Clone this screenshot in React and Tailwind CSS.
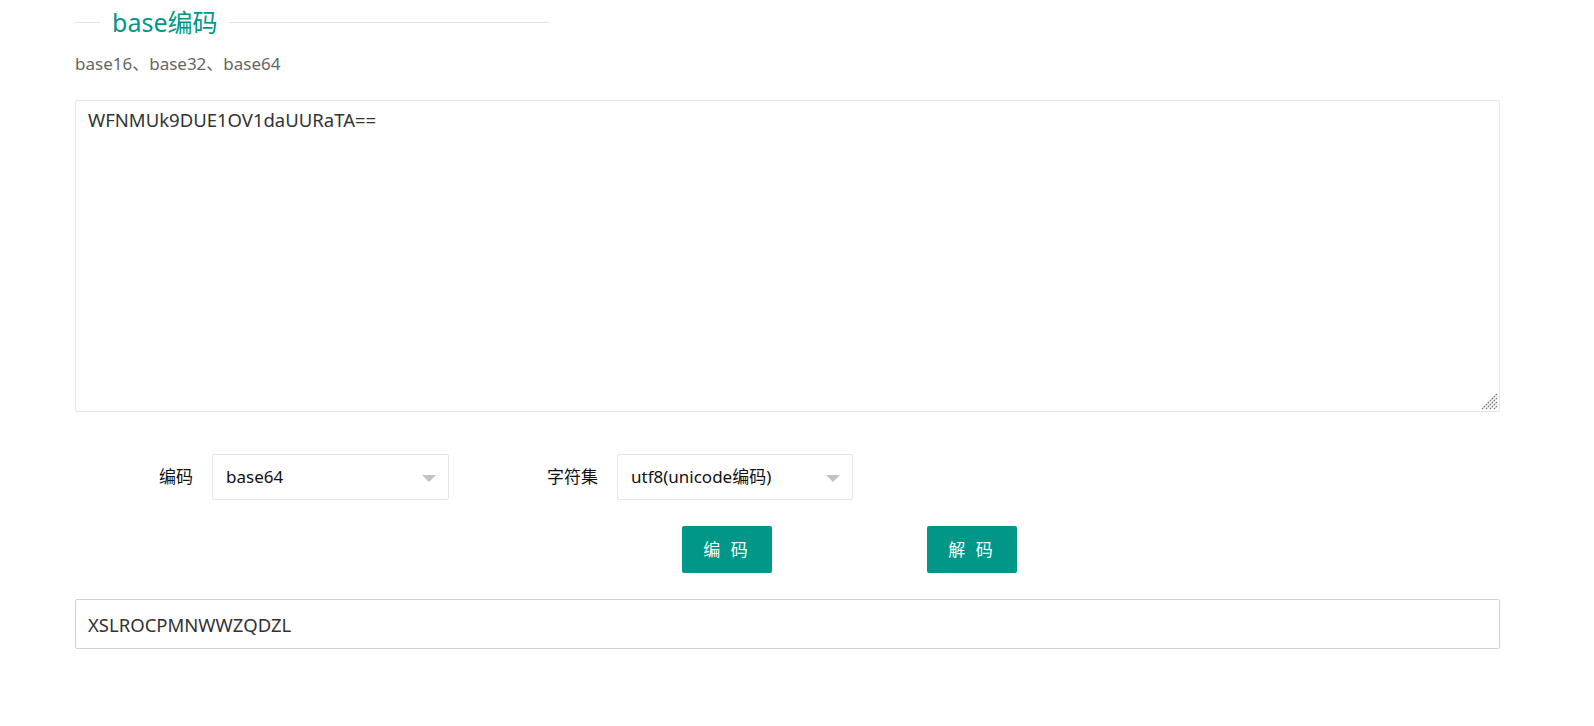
import { useState } from 'react';

const FONT = { fontFamily: '"Noto Sans", "Noto Sans CJK SC", sans-serif' };

const Select = ({ value, width }) => (
  <div
    className={`relative h-[46px] ${width} rounded-[2px] border border-[#e6e6e6] bg-white pl-[13px] flex items-center text-[17px] text-[#111]`}
  >
    <span>{value}</span>
    <span className="absolute right-[12px] top-[20px] border-x-[7px] border-t-[7px] border-x-transparent border-t-[#c2c2c2]" />
  </div>
);

export default function App() {
  const [input, setInput] = useState('WFNMUk9DUE1OV1daUURaTA==');
  const [output] = useState('XSLROCPMNWWZQDZL');

  return (
    <div className="min-h-[726px] bg-white pl-[75px] pr-[94px] pt-[7px]" style={FONT}>
      {/* Title */}
      <div className="w-[475px] h-[30px] flex items-center">
        <span className="w-[25px] h-px bg-[#e6e6e6]" />
        <h2 className="px-[12px] text-[25px] leading-[30px] text-[#009688]">base编码</h2>
        <span className="flex-1 h-px bg-[#e6e6e6]" />
      </div>
      <p className="mt-[15px] text-[17px] leading-[24px] text-[#666]">base16、base32、base64</p>

      {/* Input */}
      <div className="relative mt-[24px]">
        <textarea
          value={input}
          onChange={e => setInput(e.target.value)}
          className="block w-full h-[312px] resize-none rounded-[2px] border border-[#e6e6e6] px-[12px] py-[7px] text-[18.5px] leading-[24px] text-[#333] outline-none"
        />
        <svg className="absolute right-[2px] bottom-[2px] pointer-events-none" width="17" height="17" viewBox="0 0 17 17">
          <g stroke="#777" strokeWidth="1.2" strokeDasharray="2 0.8">
            <line x1="16" y1="1" x2="1" y2="16" />
            <line x1="16" y1="5" x2="5" y2="16" />
            <line x1="16" y1="9" x2="9" y2="16" />
            <line x1="16" y1="13" x2="13" y2="16" />
          </g>
        </svg>
      </div>

      {/* Options */}
      <div className="mt-[42px] flex items-center">
        <label className="w-[137px] pr-[19px] text-right text-[17px] text-[#111]">编码</label>
        <Select value="base64" width="w-[237px]" />
        <label className="w-[168px] pr-[19px] text-right text-[17px] text-[#111]">字符集</label>
        <Select value="utf8(unicode编码)" width="w-[236px]" />
      </div>

      {/* Actions */}
      <div className="mt-[26px] flex gap-[155px] pl-[607px]">
        <button className="w-[90px] h-[47px] rounded-[2px] bg-[#009688] text-white text-[17px] tracking-[3px]">编 码</button>
        <button className="w-[90px] h-[47px] rounded-[2px] bg-[#009688] text-white text-[17px] tracking-[3px]">解 码</button>
      </div>

      {/* Output */}
      <input
        readOnly
        value={output}
        className="mt-[26px] block w-full h-[50px] rounded-[2px] border border-[#d2d2d2] px-[12px] text-[18.5px] text-[#333] outline-none"
      />
    </div>
  );
}
